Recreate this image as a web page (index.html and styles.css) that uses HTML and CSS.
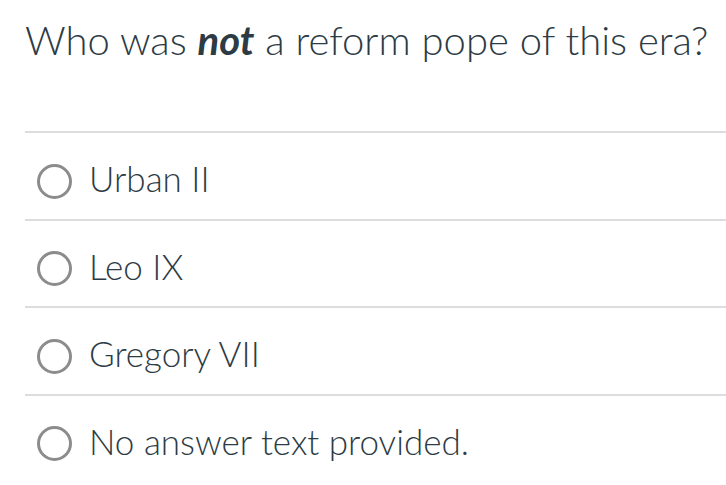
FILE: index.html
```html
<!DOCTYPE html>
<html>
<head>
<meta charset="utf-8">
<link rel="stylesheet" href="styles.css">
</head>
<body>
<div class="quiz">
  <h1 class="question">Who was <strong>not</strong> a reform pope of this era?</h1>
  <div class="answers">
    <label class="answer"><span class="radio"></span><span class="text">Urban II</span></label>
    <label class="answer"><span class="radio"></span><span class="text">Leo IX</span></label>
    <label class="answer"><span class="radio"></span><span class="text">Gregory VII</span></label>
    <label class="answer"><span class="radio"></span><span class="text">No answer text provided.</span></label>
  </div>
</div>
</body>
</html>
```
FILE: styles.css
```css
html, body {
  margin: 0;
  padding: 0;
  background: #ffffff;
}
body {
  font-family: Lato, "Open Sans", sans-serif;
  color: #2d3b45;
  overflow: hidden;
}
.quiz {
  padding-left: 25px;
}
.question {
  margin: 0;
  padding-top: 15.5px;
  font-size: 40px;
  font-weight: 300;
  line-height: 48px;
  white-space: nowrap;
}
.question strong {
  font-weight: 700;
  font-style: italic;
}
.answers {
  margin-top: 67.5px;
}
.answer {
  display: flex;
  align-items: center;
  border-top: 2px solid #dddddd;
  padding: 30px 0 19.5px 12px;
}
.radio {
  width: 35px;
  height: 35px;
  box-sizing: border-box;
  border: 3px solid #8c8c8c;
  border-radius: 50%;
  flex: none;
}
.text {
  margin: -3px 0 3px 17px;
  font-size: 35px;
  font-weight: 300;
  line-height: 36px;
}
```
